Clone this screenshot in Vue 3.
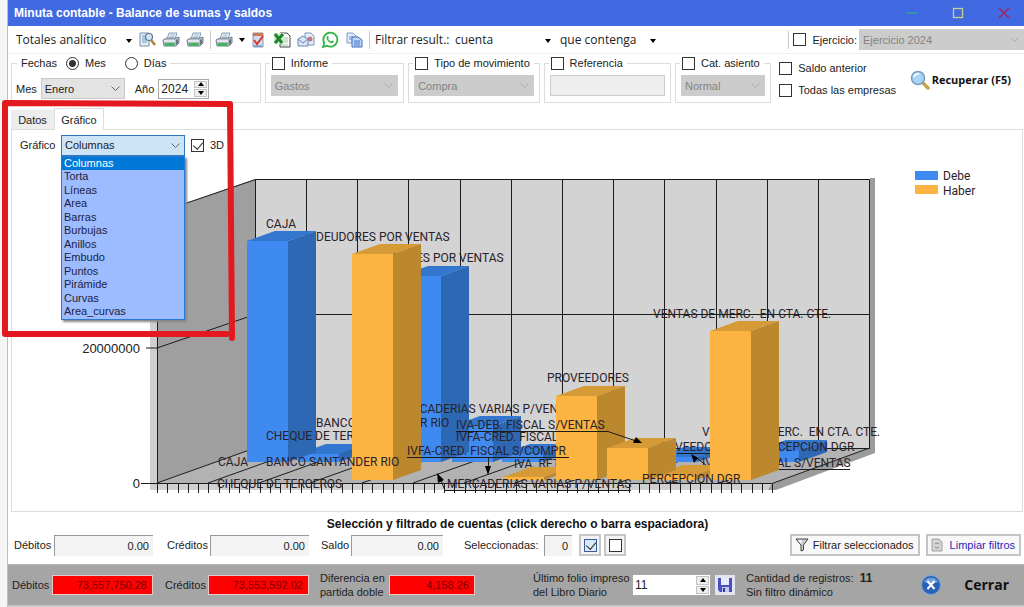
<script setup>
import { ref } from 'vue'

const chartTypes = ['Columnas', 'Torta', 'Líneas', 'Area', 'Barras', 'Burbujas', 'Anillos', 'Embudo', 'Puntos', 'Pirámide', 'Curvas', 'Area_curvas']
const chartType = ref('Columnas')

const gridX = [306, 357, 408, 460, 511, 562, 613, 664, 716, 767, 818]
const floorX = [208, 259, 310, 362, 413, 464, 515, 566, 618, 669, 720]
const ticks = Array.from({ length: 61 }, (_, i) => Math.round(157 + (i * 615) / 60))

const blueBars = [
  { x: 298, y: 454 },
  { x: 247, y: 241 },
  { x: 502, y: 454 },
  { x: 452, y: 426 },
  { x: 400, y: 276 },
  { x: 656, y: 457 },
  { x: 758, y: 450 }
].map((b) => ({ ...b, w: 41, base: 462, kind: 'blue' }))

const orangeBars = [
  { x: 352, y: 254 },
  { x: 503, y: 477 },
  { x: 556, y: 396 },
  { x: 655, y: 475 },
  { x: 607, y: 448 },
  { x: 710, y: 331 }
].map((b) => ({ ...b, w: 41, base: 480, kind: 'orange' }))

const top = (b) => `${b.x},${b.y} ${b.x + 28},${b.y - 10} ${b.x + b.w + 28},${b.y - 10} ${b.x + b.w},${b.y}`
const side = (b) => `${b.x + b.w},${b.y} ${b.x + b.w + 28},${b.y - 10} ${b.x + b.w + 28},${b.base - 10} ${b.x + b.w},${b.base}`

const backLabels = [
  { x: 266, y: 228, t: 'CAJA' },
  { x: 370, y: 262, t: 'DEUDORES POR VENTAS' },
  { x: 316, y: 427, t: 'BANCO SANTANDER RIO' },
  { x: 266, y: 440, t: 'CHEQUE DE TERCEROS' },
  { x: 395, y: 413, t: 'MERCADERIAS VARIAS P/VENTAS' },
  { x: 456, y: 441, t: 'IVFA-CRED. FISCAL S/COMPR' },
  { x: 514, y: 468, t: 'IVA. RET' },
  { x: 702, y: 436, t: 'VENTAS DE MERC.\u00a0 EN CTA. CTE.' },
  { x: 652, y: 451, t: 'PROVEEDORES' },
  { x: 756, y: 451, t: 'PERCEPCION DGR' },
  { x: 702, y: 467, t: 'IVA-DEB. FISCAL S/VENTAS' }
]
const frontLabels = [
  { x: 316, y: 241, t: 'DEUDORES POR VENTAS' },
  { x: 218, y: 466, t: 'CAJA' },
  { x: 266, y: 466, t: 'BANCO SANTANDER RIO' },
  { x: 217, y: 488, t: 'CHEQUE DE TERCEROS' },
  { x: 447, y: 488, t: 'MERCADERIAS VARIAS P/VENTAS' },
  { x: 456, y: 429, t: 'IVA-DEB. FISCAL S/VENTAS' },
  { x: 407, y: 455, t: 'IVFA-CRED. FISCAL S/COMPR' },
  { x: 547, y: 382, t: 'PROVEEDORES' },
  { x: 653, y: 318, t: 'VENTAS DE MERC.\u00a0 EN CTA. CTE.' },
  { x: 642, y: 483, t: 'PERCEPCION DGR' }
]
</script>

<template>
  <div class="window">
    <header class="titlebar">
      <h1>Minuta contable - Balance de sumas y saldos</h1>
      <div class="winbtns">
        <button type="button" aria-label="Minimizar"><svg width="12" height="12" viewBox="0 0 12 12"><path d="M1 6h10" stroke="#2fae8c" stroke-width="1.4" /></svg></button>
        <button type="button" aria-label="Maximizar"><svg width="12" height="12" viewBox="0 0 12 12"><rect x="1.5" y="1.5" width="9" height="9" fill="none" stroke="#c9cf8c" stroke-width="1.3" /></svg></button>
        <button type="button" aria-label="Cerrar ventana"><svg width="12" height="12" viewBox="0 0 12 12"><path d="M1 1l10 10M11 1L1 11" stroke="#a02860" stroke-width="1.5" /></svg></button>
      </div>
    </header>

    <div class="toolbar">
      <span class="flat report">
        <select aria-label="Reporte"><option>Totales analítico</option></select>
        <svg class="tri" width="6" height="4" viewBox="0 0 6 4"><path d="M0 0h6L3 4z" /></svg>
      </span>
      <button type="button" class="tool" aria-label="Vista previa">
        <svg width="18" height="18" viewBox="0 0 18 18"><path d="M2 2h9v13H2z" fill="#e6edf5" stroke="#7c8da3" /><path d="M4 5h5M4 7h4M4 9h4M4 11h5" stroke="#6d9fc9" /><circle cx="11" cy="6" r="3.5" fill="#cfe4f5" stroke="#62758b" stroke-width="1.2" /><path d="M13 9l4 5" stroke="#b08040" stroke-width="2.5" /></svg>
      </button>
      <button v-for="n in 2" :key="n" type="button" class="tool" aria-label="Imprimir">
        <svg width="18" height="18" viewBox="0 0 18 18"><path d="M7 2h8l-2 6H5z" fill="#f4f8fb" stroke="#8d9db0" /><path d="M8 4h5M7 6h5" stroke="#8db4d8" /><path d="M1 9l4-2h9l3-1v6l-3 3H2z" fill="#b4bcc8" stroke="#77828f" /><path d="M2 9h11v2H2z" fill="#e2e7ee" /><path d="M3 12h10l-1 3H3z" fill="#42b45c" /><path d="M14 9l2-1v4l-2 2z" fill="#66717f" /></svg>
      </button>
      <span class="sep"></span>
      <button type="button" class="tool wide" aria-label="Imprimir con opciones">
        <svg width="18" height="18" viewBox="0 0 18 18"><path d="M7 2h8l-2 6H5z" fill="#f4f8fb" stroke="#8d9db0" /><path d="M8 4h5M7 6h5" stroke="#8db4d8" /><path d="M1 9l4-2h9l3-1v6l-3 3H2z" fill="#b4bcc8" stroke="#77828f" /><path d="M2 9h11v2H2z" fill="#e2e7ee" /><path d="M3 12h10l-1 3H3z" fill="#42b45c" /><path d="M14 9l2-1v4l-2 2z" fill="#66717f" /></svg>
        <svg width="6" height="4" viewBox="0 0 6 4"><path d="M0 0h6L3 4z" /></svg>
      </button>
      <button type="button" class="tool" aria-label="Exportar a PDF">
        <svg width="18" height="18" viewBox="0 0 18 18"><path d="M4 2h10v14H4z" fill="#d3dcf0" stroke="#8795b5" /><path d="M4 2h10v3H4z" fill="#c9785c" /><path d="M5 9l3 4 6-8" fill="none" stroke="#d23a2a" stroke-width="2" /><path d="M5 15h8" stroke="#5a7cc0" /></svg>
      </button>
      <button type="button" class="tool" aria-label="Exportar a Excel">
        <svg width="18" height="18" viewBox="0 0 18 18"><path d="M7 2h7l3 3v11H7z" fill="#fff" stroke="#444" /><path d="M11 7h4M11 9h4M11 11h4M8 14h7" stroke="#9cbf9c" /><path d="M1 2h10v11H1z" fill="#d4ecd2" /><path d="M2 3l7 9M10 3l-8 9" stroke="#1f8430" stroke-width="3" /></svg>
      </button>
      <button type="button" class="tool" aria-label="Enviar por correo">
        <svg width="18" height="18" viewBox="0 0 18 18"><path d="M8 2h6l3 3v9H8z" fill="#e4edf8" stroke="#7f93b8" /><circle cx="13" cy="8" r="2.5" fill="#c87878" /><path d="M1 8l5-3 5 3v7H1z" fill="#d7e5f7" stroke="#6d86b4" /><path d="M1 8l5 4 5-4" fill="none" stroke="#6d86b4" /></svg>
      </button>
      <button type="button" class="tool" aria-label="Enviar por WhatsApp">
        <svg width="18" height="18" viewBox="0 0 18 18"><path d="M2 16l1.2-4A7 7 0 1 1 6 14.800z" fill="#fff" stroke="#35b44a" stroke-width="1.8" /><path d="M6 5.500c.8-.8 1.300-.5 1.700 1 .1.500-.6.900-.5 1.300.6 1.300 1.500 2.100 2.700 2.600.5.100.8-.9 1.300-.8 1.500.5 1.900.8 1.500 1.500-1.300 2-4 .8-5.400-.6S5 7.200 6 5.500z" fill="#35b44a" /></svg>
      </button>
      <button type="button" class="tool" aria-label="Copiar">
        <svg width="18" height="18" viewBox="0 0 18 18"><path d="M2 2h6l3 3v7H2z" fill="#dfeafa" stroke="#7e9bd0" /><path d="M4 6h5M4 8h5" stroke="#6b97db" /><path d="M7 6h6l4 3v7H7z" fill="#c2d8f6" stroke="#3c68b8" /><path d="M9 10h6M9 12h6M9 14h6" stroke="#3c78cf" /></svg>
      </button>
      <span class="sep"></span>
      <label class="seg" for="campo">Filtrar result.:</label>
      <span class="flat field">
        <select id="campo"><option>cuenta</option></select>
        <svg class="tri" width="6" height="4" viewBox="0 0 6 4"><path d="M0 0h6L3 4z" /></svg>
      </span>
      <span class="flat cond">
        <select aria-label="Condición"><option>que contenga</option></select>
        <svg class="tri" width="6" height="4" viewBox="0 0 6 4"><path d="M0 0h6L3 4z" /></svg>
      </span>
      <span class="sep push"></span>
      <label class="check"><input type="checkbox" />Ejercicio:</label>
      <span class="combo off ejercicio">
        <select disabled aria-label="Ejercicio"><option>Ejercicio 2024</option></select>
        <svg class="chev" width="9" height="6" viewBox="0 0 9 6"><path d="M0.500 0.500l4 4 4-4" /></svg>
      </span>
    </div>

    <div class="filters">
      <fieldset>
        <legend class="dates">Fechas
          <label class="check"><input type="radio" name="periodo" checked />Mes</label>
          <label class="check"><input type="radio" name="periodo" />Días</label>
        </legend>
        <div class="inner">
          <label for="mes">Mes</label>
          <span class="combo mes">
            <select id="mes"><option>Enero</option></select>
            <svg class="chev" width="9" height="6" viewBox="0 0 9 6"><path d="M0.500 0.500l4 4 4-4" /></svg>
          </span>
          <label class="year" for="anio">Año</label>
          <span class="spin">
            <input id="anio" type="text" value="2024" />
            <span class="arrows">
              <button type="button" aria-label="Subir año"><svg width="6" height="4" viewBox="0 0 6 4"><path d="M0 4h6L3 0z" /></svg></button>
              <button type="button" aria-label="Bajar año"><svg width="6" height="4" viewBox="0 0 6 4"><path d="M0 0h6L3 4z" /></svg></button>
            </span>
          </span>
        </div>
      </fieldset>
      <fieldset>
        <legend><label class="check"><input type="checkbox" />Informe</label></legend>
        <div class="inner">
          <span class="combo off grow"><select disabled aria-label="Informe"><option>Gastos</option></select>
            <svg class="chev" width="9" height="6" viewBox="0 0 9 6"><path d="M0.500 0.500l4 4 4-4" /></svg></span>
        </div>
      </fieldset>
      <fieldset>
        <legend><label class="check"><input type="checkbox" />Tipo de movimiento</label></legend>
        <div class="inner">
          <span class="combo off grow"><select disabled aria-label="Tipo de movimiento"><option>Compra</option></select>
            <svg class="chev" width="9" height="6" viewBox="0 0 9 6"><path d="M0.500 0.500l4 4 4-4" /></svg></span>
        </div>
      </fieldset>
      <fieldset>
        <legend><label class="check"><input type="checkbox" />Referencia</label></legend>
        <div class="inner"><input class="ref" type="text" disabled aria-label="Referencia" /></div>
      </fieldset>
      <fieldset>
        <legend><label class="check"><input type="checkbox" />Cat. asiento</label></legend>
        <div class="inner">
          <span class="combo off grow"><select disabled aria-label="Cat. asiento"><option>Normal</option></select>
            <svg class="chev" width="9" height="6" viewBox="0 0 9 6"><path d="M0.500 0.500l4 4 4-4" /></svg></span>
        </div>
      </fieldset>
      <div class="stack">
        <label class="check"><input type="checkbox" />Saldo anterior</label>
        <label class="check"><input type="checkbox" />Todas las empresas</label>
      </div>
      <button type="button" class="fetch">
        <svg width="20" height="20" viewBox="0 0 20 20"><path d="M12 12l6 6" stroke="#c9a04e" stroke-width="3.5" stroke-linecap="round" /><circle cx="8" cy="8" r="6.5" fill="#a9d4f5" stroke="#7a9cc0" stroke-width="1.5" /><path d="M4 7a4 4 0 0 1 5-3" fill="none" stroke="#eef8ff" stroke-width="2" /></svg>
        Recuperar (F5)
      </button>
    </div>

    <main class="tabs">
      <div class="tablist" role="tablist">
        <button type="button" role="tab" aria-selected="false">Datos</button>
        <button type="button" role="tab" aria-selected="true" class="on">Gráfico</button>
      </div>
      <section class="panel">
        <div class="options">
          <label for="grafico">Gráfico</label>
          <span class="combo open">
            <select id="grafico" v-model="chartType"><option v-for="c in chartTypes" :key="c">{{ c }}</option></select>
            <svg class="chev" width="9" height="6" viewBox="0 0 9 6"><path d="M0.500 0.500l4 4 4-4" /></svg>
            <ul class="menu">
              <li v-for="c in chartTypes" :key="c" :class="{ sel: c === chartType }" @click="chartType = c">{{ c }}</li>
            </ul>
          </span>
          <label class="check"><input type="checkbox" checked />3D</label>
        </div>
        <svg class="chart" viewBox="12 162 1010 349">
          <polygon points="150,216 157,213 157,483 772,483 772,490 150,490" fill="#cfcfcf" />
          <polygon points="870,178 875,178 875,453 776,490 768,490 772,483 870,448" fill="#9c9c9c" />
          <polygon points="157,213 255,179 255,448 157,483" fill="#9f9f9f" />
          <rect x="255" y="179" width="615" height="269" fill="#d3d3d3" />
          <polygon points="157,483 255,448 870,448 772,483" fill="#b2b2b2" />
          <g class="line">
            <path d="M157.500 483V213L255.500 179.500H869.500V448L772 483.500M255.500 179.500V448M157 483.500H772M255 448.500H870M157 483L255 448" />
            <path d="M146 348H157L255 314.500H870M141 483.500H157" />
            <path v-for="x in gridX" :key="'g' + x" :d="`M${x}.500 179V448`" />
            <path v-for="x in floorX" :key="'f' + x" :d="`M${x} 483L${x + 98} 448`" />
          </g>
          <g v-for="(b, i) in blueBars" :key="'b' + i" :class="b.kind">
            <rect class="front" :x="b.x" :y="b.y" :width="b.w" :height="b.base - b.y" />
            <polygon class="top" :points="top(b)" />
            <polygon class="side" :points="side(b)" />
          </g>
          <g class="lbl"><text v-for="(l, i) in backLabels" :key="'k' + i" :x="l.x" :y="l.y">{{ l.t }}</text></g>
          <path class="line" d="M677 453.500H720M702 469.500H850M706 465L694 456" />
          <polygon points="691,454 698,458 694,463" />
          <g v-for="(b, i) in orangeBars" :key="'o' + i" :class="b.kind">
            <rect class="front" :x="b.x" :y="b.y" :width="b.w" :height="b.base - b.y" />
            <polygon class="top" :points="top(b)" />
            <polygon class="side" :points="side(b)" />
          </g>
          <path class="line" d="M157 483.500H772" />
          <path v-for="t in ticks" :key="'t' + t" class="line" :d="`M${t}.500 483V493`" />
          <g class="lbl"><text v-for="(l, i) in frontLabels" :key="'r' + i" :x="l.x" :y="l.y">{{ l.t }}</text></g>
          <path class="line" d="M456 431.500H608L636 441M407 457.500H569M488.500 457V468M631 490.500H445L440 478" />
          <polygon points="642,443 633,443 636,437" />
          <polygon points="488,475 485,466 491,466" />
          <polygon points="437,473 438,483 444,480" />
          <g class="axis"><text x="140" y="353" text-anchor="end">20000000</text><text x="140" y="488" text-anchor="end">0</text></g>
          <rect x="915" y="171" width="23" height="9" fill="#3f8af0" />
          <rect x="915" y="185" width="23" height="9" fill="#fbb441" />
          <g class="lbl"><text x="943" y="180">Debe</text><text x="943" y="195">Haber</text></g>
        </svg>
      </section>
      <svg class="mark" width="236" height="244" viewBox="0 0 236 244">
        <path d="M4 4L229 5L231 239M4 4L4 235L226 235" fill="none" stroke="#e4191f" stroke-width="6" stroke-linecap="round" stroke-linejoin="round" />
      </svg>
    </main>

    <section class="selection">
      <h2>Selección y filtrado de cuentas (click derecho o barra espaciadora)</h2>
      <div class="row">
        <label class="l1" for="sd">Débitos</label><input id="sd" class="num w1" readonly value="0.00" />
        <label class="l2" for="sc">Créditos</label><input id="sc" class="num w1" readonly value="0.00" />
        <label class="l3" for="ss">Saldo</label><input id="ss" class="num w2" readonly value="0.00" />
        <label class="l4" for="sn">Seleccionadas:</label><input id="sn" class="num w3" readonly value="0" />
        <label class="box"><input type="checkbox" checked aria-label="Seleccionar todas" class="blue" /></label>
        <label class="box"><input type="checkbox" aria-label="Quitar selección" /></label>
        <button type="button" class="btn push">
          <svg width="14" height="14" viewBox="0 0 14 14"><path d="M1 1h12L8.500 7v5L6 13V7z" fill="#c9ccd2" stroke="#444" /><path d="M3 2h4l-1 4z" fill="#fff" /></svg>
          Filtrar seleccionados
        </button>
        <button type="button" class="btn link">
          <svg width="12" height="14" viewBox="0 0 12 14"><path d="M1 1h7l3 3v9H1z" fill="#d4d4d4" stroke="#a0a0a0" /><path d="M4 6a2.500 2.500 0 0 1 4 0M8 9a2.500 2.500 0 0 1-4 0" fill="none" stroke="#888" /></svg>
          Limpiar filtros
        </button>
      </div>
    </section>

    <footer class="totals">
      <label class="l1" for="td">Débitos</label><input id="td" class="red w1" readonly value="73,557,750.28" />
      <label class="l2" for="tc">Créditos</label><input id="tc" class="red w1" readonly value="73,553,592.02" />
      <label class="l3" for="tf">Diferencia en<br />partida doble</label><input id="tf" class="red w2" readonly value="4,158.26" />
      <label class="l4" for="folio">Último folio impreso<br />del Libro Diario</label>
      <span class="spin folio">
        <input id="folio" type="text" value="11" />
        <span class="arrows">
          <button type="button" aria-label="Subir folio"><svg width="6" height="4" viewBox="0 0 6 4"><path d="M0 4h6L3 0z" /></svg></button>
          <button type="button" aria-label="Bajar folio"><svg width="6" height="4" viewBox="0 0 6 4"><path d="M0 0h6L3 4z" /></svg></button>
        </span>
      </span>
      <button type="button" class="save" aria-label="Guardar">
        <svg width="16" height="16" viewBox="0 0 16 16"><path d="M1 1h14v14H3l-2-2z" fill="#4a4fc0" /><path d="M4 1h8v7H4z" fill="#e8ecff" /><path d="M5 10h7v5H5z" fill="#c4c8ec" /><path d="M6 11h2v4H6z" fill="#3238a0" /></svg>
      </button>
      <p class="count">Cantidad de registros: <b>11</b><br />Sin filtro dinámico</p>
      <button type="button" class="close">
        <svg width="22" height="22" viewBox="0 0 22 22"><circle cx="11" cy="11" r="9.5" fill="#2a62b4" stroke="#7fa6dc" /><path d="M4 8a8 8 0 0 1 14 0q-7 3-14 0z" fill="#6f9fdc" /><path d="M7.500 7l7 8M14.500 7l-7 8" stroke="#fff" stroke-width="2" /></svg>
        <span>Cerrar</span>
      </button>
    </footer>
  </div>
</template>

<style>
body {
  background: #f5f5f5;
}
</style>

<style scoped>
* {
  box-sizing: border-box;
}
.window {
  margin-left: 7px;
  border-left: 1px solid #b9c0c8;
  border-bottom: 2px solid #c9c9c9;
  background: #fff;
  color: #222;
  font: 11px/14px "Liberation Sans", Arial, sans-serif;
}
button,
input,
select {
  font: inherit;
  color: inherit;
  margin: 0;
  padding: 0;
  border: 0;
  border-radius: 0;
  background: none;
  appearance: none;
  min-width: 0;
}
h1,
h2,
p,
ul {
  margin: 0;
  padding: 0;
}
svg {
  display: block;
  flex: none;
}
label {
  white-space: nowrap;
}
.titlebar {
  display: flex;
  align-items: center;
  justify-content: space-between;
  height: 26px;
  padding: 0 14px 0 6px;
  background: #4169e1;
}
h1 {
  color: #fff;
  font-size: 12px;
  line-height: 16px;
}
.winbtns {
  display: flex;
  gap: 34px;
}
.winbtns button {
  display: block;
}
.toolbar {
  display: flex;
  align-items: center;
  height: 28px;
  padding-left: 6px;
  border-bottom: 1px solid #f0f0f0;
  font: 12px/16px "Open Sans", "Noto Sans", sans-serif;
}
.toolbar .check,
.toolbar .combo {
  font: 11px/14px "Liberation Sans", Arial, sans-serif;
}
.toolbar .check {
  margin: 0 2px 0 4px;
}
.flat {
  position: relative;
  display: flex;
}
.flat select {
  width: 100%;
  padding-left: 2px;
}
.report {
  width: 121px;
}
.field {
  width: 101px;
  margin-left: 8px;
}
.cond {
  width: 101px;
  margin-left: 4px;
}
.tri {
  position: absolute;
  right: 3px;
  top: 7px;
}
.tool {
  display: flex;
  align-items: center;
  justify-content: center;
  width: 24px;
  height: 22px;
}
.wide {
  width: 32px;
  gap: 6px;
}
.sep {
  width: 1px;
  height: 18px;
  margin: 0 3px;
  background: #c8c8c8;
}
.push {
  margin-left: auto;
}
.sep.push {
  margin-right: 0;
}
.seg {
  width: 70px;
  margin-left: 2px;
}
.check {
  display: flex;
  align-items: center;
  gap: 6px;
}
.check input,
.box input {
  position: relative;
  width: 13px;
  height: 13px;
  border: 1px solid #333;
  background: #fff;
}
.check input[type="radio"] {
  border-radius: 50%;
}
.check input[type="radio"]:checked {
  background: radial-gradient(circle, #333 3px, #fff 4px);
}
.check input[type="checkbox"]:checked::after,
.box input:checked::after {
  content: "";
  position: absolute;
  left: 3px;
  top: 0;
  width: 5px;
  height: 8px;
  border: solid #333;
  border-width: 0 1px 1px 0;
  transform: rotate(40deg);
}
.combo {
  position: relative;
  display: flex;
  height: 21px;
  border: 1px solid #c8c8c8;
  background: #e3e3e3;
}
.combo select {
  width: 100%;
  padding: 0 16px 0 3px;
}
.off {
  border-color: #ccc;
  background: #ccc;
  color: #838383;
}
.off select {
  opacity: 1;
}
.chev {
  position: absolute;
  right: 4px;
  top: 7px;
  fill: none;
  stroke: #666;
}
.off .chev {
  stroke: #aaa;
}
.ejercicio {
  width: 165px;
}
.filters {
  display: grid;
  grid-template-columns: 249fr 139fr 131fr 127fr 96fr 126fr 116fr;
  gap: 4px;
  height: 50px;
  padding: 2px 2px 0 3px;
}
fieldset {
  min-width: 0;
  height: 47px;
  margin: 0;
  padding: 0 5px;
  border: 1px solid #ddd;
}
legend {
  height: 14px;
  margin-left: -1px;
  padding: 0 4px 0 2px;
}
legend.dates {
  display: flex;
  align-items: center;
  gap: 9px;
  margin-left: 0;
  padding-left: 4px;
}
.dates .check + .check {
  margin-left: 10px;
}
.inner {
  display: flex;
  align-items: center;
  gap: 4px;
  padding-top: 5px;
}
.dates + .inner {
  padding-top: 8px;
  margin-left: -1px;
}
.grow {
  flex: 1;
}
.mes {
  width: 84px;
}
.year {
  margin-left: 6px;
}
.spin {
  display: flex;
  height: 20px;
  border: 1px solid #a8a8a8;
  background: #fff;
}
.spin input {
  width: 34px;
  padding-left: 2px;
  font-size: 12px;
}
.arrows {
  display: flex;
  flex-direction: column;
  gap: 1px;
  width: 15px;
  padding: 1px;
}
.arrows button {
  flex: 1;
  display: flex;
  align-items: center;
  justify-content: center;
  border: 1px solid #c4c4c4;
  background: #eee;
}
.ref {
  flex: 1;
  height: 21px;
  border: 1px solid #ccc;
  background: #eee;
}
.stack {
  display: flex;
  flex-direction: column;
  gap: 8px;
  padding: 5px 0 0 4px;
}
.fetch {
  display: flex;
  align-items: center;
  gap: 2px;
  padding-left: 4px;
  color: #111;
  font: bold 11px/16px "Open Sans", "Noto Sans", sans-serif;
  white-space: nowrap;
}
.tabs {
  position: relative;
  padding: 4px 1px 0 3px;
}
.tablist {
  display: flex;
  align-items: flex-end;
  height: 21px;
}
.tablist button {
  height: 19px;
  width: 43px;
  background: #ededed;
}
.tablist .on {
  height: 22px;
  width: 50px;
  margin-bottom: -1px;
  border: 1px solid #ddd;
  border-bottom: 0;
  background: #fff;
}
.panel {
  border: 1px solid #ddd;
}
.options {
  display: flex;
  align-items: center;
  height: 32px;
  padding: 0 0 2px 8px;
}
.options > label:first-child {
  width: 41px;
}
.open {
  width: 124px;
  margin-right: 6px;
  border-color: #3078b8;
  background: #cde4f7;
}
.menu {
  position: absolute;
  left: -1px;
  top: 20px;
  display: flex;
  flex-direction: column;
  width: 124px;
  height: 164px;
  border: 1px solid #2a78d0;
  background: #9dbbff;
  box-shadow: 2px 2px 2px #888;
  list-style: none;
  color: #1c2340;
}
.menu li {
  flex: 1;
  padding-left: 2px;
  line-height: 13px;
}
.menu .sel {
  background: #0078d7;
  color: #fff;
}
.chart {
  width: 100%;
  height: auto;
}
.line {
  fill: none;
  stroke: #1c1c1c;
  stroke-width: 1;
}
.blue .front {
  fill: #3f8af0;
}
.blue .top {
  fill: #3276d0;
}
.blue .side {
  fill: #2d68b4;
}
.orange .front {
  fill: #fbb441;
}
.orange .top {
  fill: #d69a36;
}
.orange .side {
  fill: #bb882e;
}
.lbl {
  font: 12px Roboto, "Liberation Sans", sans-serif;
  fill: #2a222a;
}
.axis {
  font: 13px "Liberation Sans", Arial, sans-serif;
  fill: #222;
}
.mark {
  position: absolute;
  left: -7px;
  top: -5px;
  pointer-events: none;
}
.selection {
  padding: 5px 3px 8px 6px;
}
h2 {
  color: #111;
  font-size: 12px;
  line-height: 14px;
  text-align: center;
}
.row,
.totals {
  display: flex;
  align-items: center;
}
.row {
  padding-top: 3px;
}
.num {
  height: 21px;
  padding-right: 4px;
  border: solid #999;
  border-width: 1px 0 0 1px;
  background: #f3f3f3;
  text-align: right;
}
.l1 {
  width: 40px;
}
.l2 {
  width: 43px;
  margin-left: 14px;
}
.l3 {
  width: 30px;
  margin-left: 12px;
}
.l4 {
  width: 80px;
  margin-left: 21px;
}
.w1 {
  width: 99px;
}
.w2 {
  width: 92px;
}
.w3 {
  width: 28px;
  margin-right: 7px;
}
.box {
  display: flex;
  align-items: center;
  justify-content: center;
  width: 22px;
  height: 22px;
  margin-right: 3px;
  border: 2px solid #c6c6c6;
  background: #f3f3f3;
}
.box .blue {
  border-color: #3a5a98;
  background: #dbe8fa;
}
.btn {
  display: flex;
  align-items: center;
  gap: 4px;
  height: 22px;
  padding: 0 4px 0 3px;
  border: 2px solid #c4c4c4;
  background: #f8f8f8;
}
.btn + .btn {
  margin-left: 6px;
}
.link {
  color: #2b28b8;
  gap: 7px;
}
.totals {
  height: 41px;
  padding: 0 15px 0 4px;
  background: #a5a5a5;
  border-top: 1px solid #b8b8b8;
}
.red {
  height: 20px;
  padding-right: 5px;
  border: 1px solid #e8c8c8;
  background: #f00;
  color: #7a0000;
  text-align: right;
}
.totals .w1 {
  width: 101px;
}
.totals .l2 {
  margin-left: 12px;
}
.totals .l3 {
  width: 69px;
  margin-left: 11px;
}
.totals .w2 {
  width: 86px;
}
.totals .l4 {
  width: 99px;
  margin-left: 58px;
}
.folio {
  height: 22px;
}
.folio input {
  width: 62px;
}
.save {
  margin-left: 4px;
  padding: 2px;
  background: #e4e4f0;
}
.count {
  margin-left: 11px;
  white-space: nowrap;
}
.count b {
  margin-left: 3px;
  font-size: 12px;
}
.close {
  display: flex;
  align-items: center;
  gap: 22px;
  margin-left: auto;
  color: #111;
  font: bold 14px/18px "Open Sans", "Noto Sans", sans-serif;
}
</style>
